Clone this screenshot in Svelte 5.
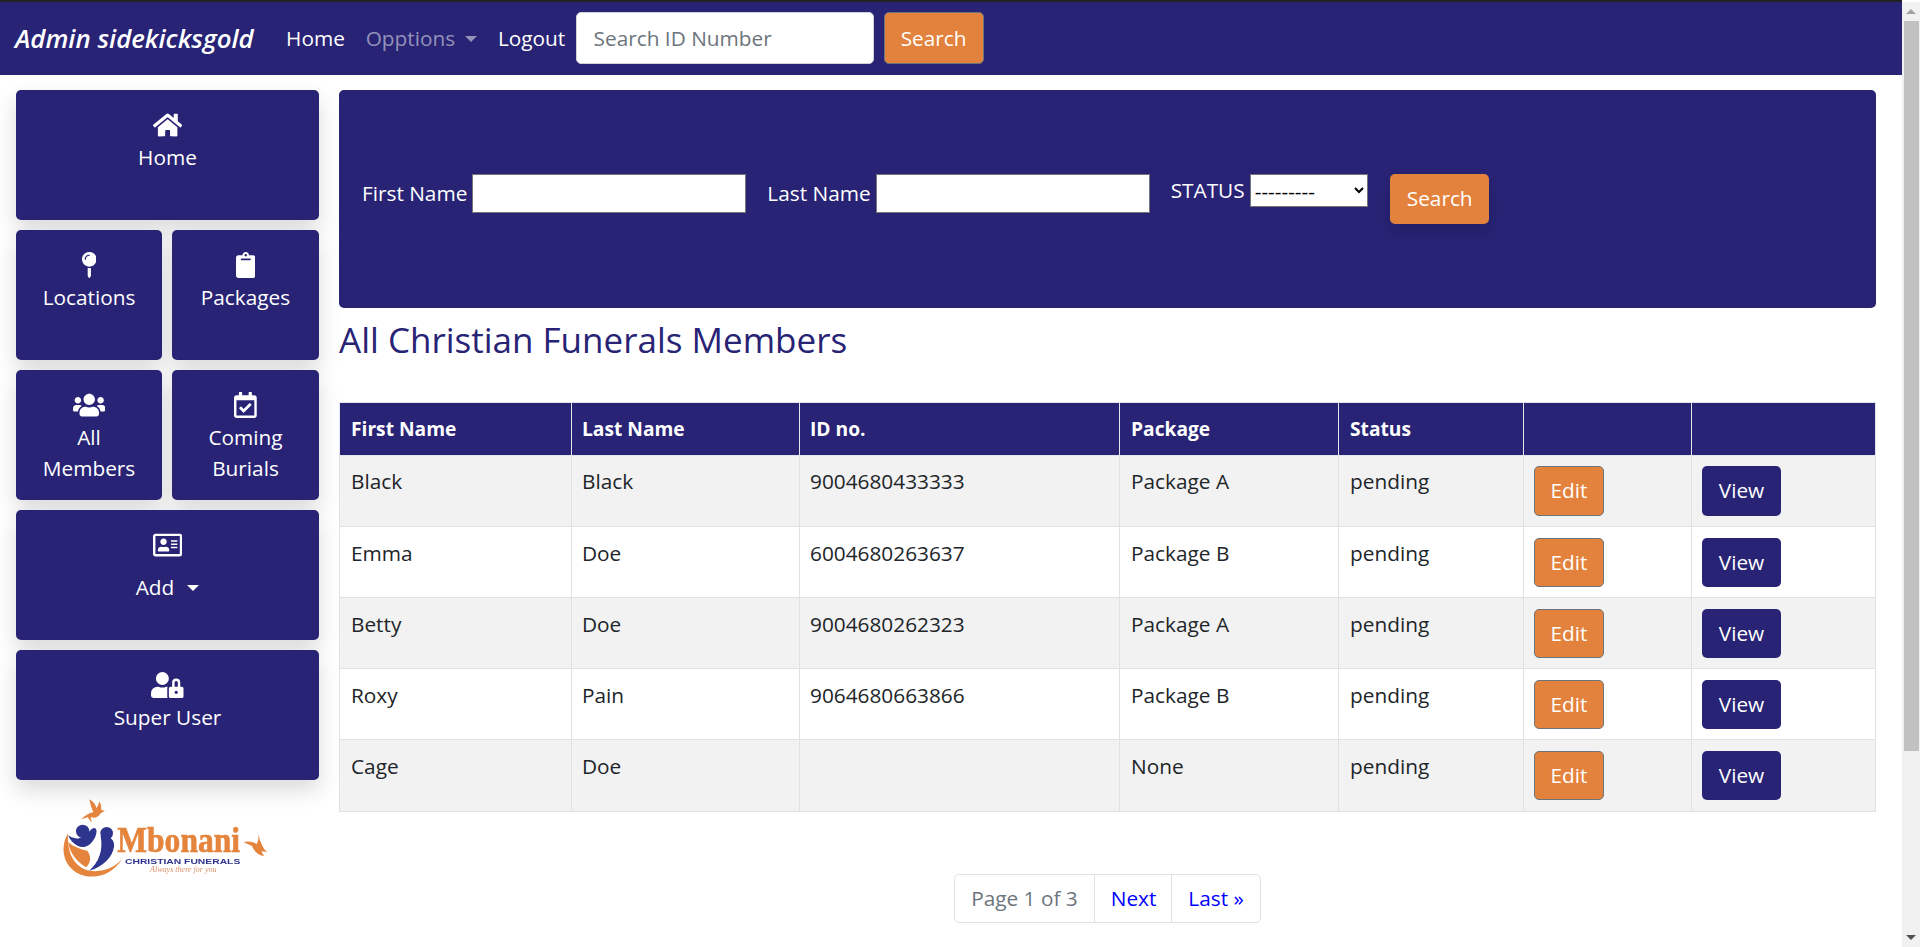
<script>
  const icons = {
    home: { vb: '0 0 576 512', d: 'M280.37 148.26L96 300.11V464a16 16 0 0 0 16 16l112.06-.29a16 16 0 0 0 15.92-16V368a16 16 0 0 1 16-16h64a16 16 0 0 1 16 16v95.64a16 16 0 0 0 16 16.05L464 480a16 16 0 0 0 16-16V300L295.67 148.26a12.19 12.19 0 0 0-15.3 0zM571.6 251.47L488 182.56V44.05a12 12 0 0 0-12-12h-56a12 12 0 0 0-12 12v72.61L318.47 43a48 48 0 0 0-61 0L4.34 251.47a12 12 0 0 0-1.6 16.9l25.5 31A12 12 0 0 0 45.15 301l235.22-193.74a12.19 12.19 0 0 1 15.3 0L530.9 301a12 12 0 0 0 16.9-1.6l25.5-31a12 12 0 0 0-1.7-16.93z' },
    pin: { vb: '0 0 288 512', d: 'M112 316.94v156.69l22.02 33.02c4.75 7.12 15.22 7.12 19.97 0L176 473.63V316.94c-10.39 1.92-21.06 3.06-32 3.06s-21.61-1.14-32-3.06zM144 0C64.47 0 0 64.47 0 144s64.47 144 144 144 144-64.47 144-144S223.53 0 144 0zm0 76c-37.5 0-68 30.5-68 68 0 6.62-5.38 12-12 12s-12-5.38-12-12c0-50.73 41.28-92 92-92 6.62 0 12 5.38 12 12s-5.38 12-12 12z' },
    clip: { vb: '0 0 384 512', d: 'M384 112v352c0 26.51-21.49 48-48 48H48c-26.51 0-48-21.49-48-48V112c0-26.51 21.49-48 48-48h80c0-35.29 28.71-64 64-64s64 28.71 64 64h80c26.51 0 48 21.49 48 48zM192 40c-13.255 0-24 10.745-24 24s10.745 24 24 24 24-10.745 24-24-10.745-24-24-24m96 114v-20a6 6 0 0 0-6-6H102a6 6 0 0 0-6 6v20a6 6 0 0 0 6 6h180a6 6 0 0 0 6-6z' },
    users: { vb: '0 0 640 512', d: 'M96 224c35.3 0 64-28.7 64-64s-28.7-64-64-64-64 28.7-64 64 28.7 64 64 64zm448 0c35.3 0 64-28.7 64-64s-28.7-64-64-64-64 28.7-64 64 28.7 64 64 64zm32 32h-64c-17.6 0-33.5 7.1-45.1 18.6 40.3 22.1 68.9 62 75.1 109.4h66c17.7 0 32-14.3 32-32v-32c0-35.3-28.7-64-64-64zm-256 0c61.9 0 112-50.1 112-112S381.9 32 320 32 208 82.1 208 144s50.1 112 112 112zm76.8 32h-8.3c-20.8 10-43.9 16-68.5 16s-47.6-6-68.5-16h-8.3C179.6 288 128 339.6 128 403.2V432c0 26.5 21.5 48 48 48h288c26.5 0 48-21.5 48-48v-28.8c0-63.6-51.6-115.2-115.2-115.2zm-223.7-13.4C161.5 263.1 145.6 256 128 256H64c-35.3 0-64 28.7-64 64v32c0 17.7 14.3 32 32 32h65.9c6.3-47.4 34.9-87.3 75.2-109.4z' },
    cal: { vb: '0 0 448 512', d: 'M400 64h-48V12c0-6.627-5.373-12-12-12h-40c-6.627 0-12 5.373-12 12v52H160V12c0-6.627-5.373-12-12-12h-40c-6.627 0-12 5.373-12 12v52H48C21.49 64 0 85.49 0 112v352c0 26.51 21.49 48 48 48h352c26.51 0 48-21.49 48-48V112c0-26.51-21.49-48-48-48zm-6 400H54a6 6 0 0 1-6-6V160h352v298a6 6 0 0 1-6 6zm-52.849-200.65L198.842 404.519c-4.705 4.667-12.303 4.637-16.971-.068l-75.091-75.699c-4.667-4.705-4.637-12.303.068-16.971l22.719-22.536c4.705-4.667 12.303-4.637 16.97.069l44.104 44.461 111.072-110.181c4.705-4.667 12.303-4.637 16.971.068l22.536 22.718c4.667 4.706 4.637 12.304-.069 16.971z' },
    card: { vb: '0 0 576 512', d: 'M528 32H48C21.5 32 0 53.5 0 80v352c0 26.5 21.5 48 48 48h480c26.5 0 48-21.5 48-48V80c0-26.5-21.5-48-48-48zm0 400H48V80h480v352zM208 256c35.3 0 64-28.7 64-64s-28.7-64-64-64-64 28.7-64 64 28.7 64 64 64zm-89.6 128h179.2c12.4 0 22.4-8.6 22.4-19.2v-19.2c0-31.8-30.1-57.6-67.2-57.6-10.8 0-18.7 8-44.8 8-26.9 0-33.4-8-44.8-8-37.1 0-67.2 25.8-67.2 57.6v19.2c0 10.6 10 19.2 22.4 19.2zM360 320h112c4.4 0 8-3.6 8-8v-16c0-4.4-3.6-8-8-8H360c-4.4 0-8 3.6-8 8v16c0 4.4 3.6 8 8 8zm0-64h112c4.4 0 8-3.6 8-8v-16c0-4.4-3.6-8-8-8H360c-4.4 0-8 3.6-8 8v16c0 4.4 3.6 8 8 8zm0-64h112c4.4 0 8-3.6 8-8v-16c0-4.4-3.6-8-8-8H360c-4.4 0-8 3.6-8 8v16c0 4.4 3.6 8 8 8z' },
    lock: { vb: '0 0 640 512', d: 'M224 256A128 128 0 1 0 96 128a128 128 0 0 0 128 128zm96 64a63.08 63.08 0 0 1 8.1-30.5c-4.8-.5-9.5-1.5-14.5-1.5h-16.7a174.08 174.08 0 0 1-145.8 0h-16.7A134.43 134.43 0 0 0 0 422.4V464a48 48 0 0 0 48 48h280.9a63.54 63.54 0 0 1-8.9-32zm288-32h-32v-80a80 80 0 0 0-160 0v80h-32a32 32 0 0 0-32 32v160a32 32 0 0 0 32 32h224a32 32 0 0 0 32-32V320a32 32 0 0 0-32-32zM496 432a32 32 0 1 1 32-32 32 32 0 0 1-32 32zm32-144h-64v-80a32 32 0 0 1 64 0z' }
  };

  const tiles = [
    { icon: 'home', label: 'Home', wide: true },
    { icon: 'pin', label: 'Locations' },
    { icon: 'clip', label: 'Packages' },
    { icon: 'users', label: 'All Members' },
    { icon: 'cal', label: 'Coming Burials' },
    { icon: 'card', label: 'Add', wide: true, caret: true },
    { icon: 'lock', label: 'Super User', wide: true }
  ];

  const headers = ['First Name', 'Last Name', 'ID no.', 'Package', 'Status', '', ''];

  const members = [
    ['Black', 'Black', '9004680433333', 'Package A'],
    ['Emma', 'Doe', '6004680263637', 'Package B'],
    ['Betty', 'Doe', '9004680262323', 'Package A'],
    ['Roxy', 'Pain', '9064680663866', 'Package B'],
    ['Cage', 'Doe', '', 'None']
  ];
</script>

<div class="page">
  <nav class="navbar">
    <span class="brand">Admin sidekicksgold</span>
    <a class="nav-link">Home</a>
    <a class="nav-link muted">Opptions<i class="caret"></i></a>
    <a class="nav-link">Logout</a>
    <input class="nav-search" placeholder="Search ID Number" />
    <button class="orange nav-btn">Search</button>
  </nav>

  <div class="content">
    <aside class="sidebar">
      <div class="tiles">
        {#each tiles as t}
          <div class="tile" class:wide={t.wide} class:drop={t.caret}>
            <svg class="icon" viewBox={icons[t.icon].vb} fill="currentColor"><path d={icons[t.icon].d} /></svg>
            <span class="tile-label">{t.label}{#if t.caret}<i class="caret white"></i>{/if}</span>
          </div>
        {/each}
      </div>

      <svg class="logo" viewBox="0 0 750 360">
        <g fill="#e5843c">
          <path d="M148 58 C160 64 166 74 170 84 C174 78 177 70 178 64 C184 74 184 84 184 90 L195 92 L182 100 C174 114 162 116 152 110 L155 128 L143 112 L124 118 C134 106 146 100 160 96 C154 84 150 70 148 58Z" />
          <path d="M652 154 C658 168 656 180 650 192 C640 186 626 182 610 186 L636 198 C642 214 656 226 672 228 L664 214 L682 216 C668 206 666 190 660 182 C658 172 656 164 652 154Z" />
          <path d="M84 160 C60 200 68 254 110 278 C154 302 214 290 246 238 C222 264 186 278 150 272 C108 264 80 226 84 160Z" />
          <path d="M84 186 C90 220 110 244 138 262 C156 244 152 226 142 212 C122 208 100 200 84 186Z" />
          <text class="logo-name" x="232" y="215" textLength="368" lengthAdjust="spacingAndGlyphs">Mbonani</text>
        </g>
        <g fill="#2e358f">
          <circle cx="128" cy="154" r="20" />
          <path d="M84 166 C104 180 126 180 150 152 C164 136 176 146 166 170 C152 200 130 206 114 198 C100 192 90 180 84 166Z" />
          <circle cx="200" cy="160" r="19" />
          <path d="M182 168 C206 164 226 180 222 200 C218 230 190 260 148 272 C176 246 190 214 182 168Z" />
          <text class="logo-sub" x="255" y="251" textLength="346" lengthAdjust="spacingAndGlyphs">CHRISTIAN FUNERALS</text>
        </g>
        <text class="logo-tag" x="330" y="276" textLength="200" lengthAdjust="spacingAndGlyphs">Always there for you</text>
      </svg>
    </aside>

    <main class="main">
      <form class="filter">
        <label class="field">First Name<input type="text" /></label>
        <label class="field">Last Name<input type="text" /></label>
        <label class="field status">STATUS
          <select><option>---------</option></select>
        </label>
        <button type="button" class="orange filter-btn">Search</button>
      </form>

      <h1>All Christian Funerals Members</h1>

      <table>
        <thead>
          <tr>{#each headers as h}<th>{h}</th>{/each}</tr>
        </thead>
        <tbody>
          {#each members as m}
            <tr>
              {#each m as cell}<td>{cell}</td>{/each}
              <td>pending</td>
              <td class="act"><button class="orange edit">Edit</button></td>
              <td class="act"><button class="view">View</button></td>
            </tr>
          {/each}
        </tbody>
      </table>

      <div class="pager-wrap">
        <div class="pager">
          <span class="current">Page 1 of 3</span>
          <a>Next</a>
          <a>Last »</a>
        </div>
      </div>
    </main>
  </div>

  <div class="scrollbar">
    <i class="arrow up"></i>
    <div class="thumb"></div>
    <i class="arrow down"></i>
  </div>
</div>

<style>
  :global(body) {
    margin: 0;
    background: #fff;
    overflow: hidden;
  }

  .page {
    width: 1902px;
    height: 947px;
    font-family: "Open Sans", sans-serif;
    font-size: 20.8px;
    line-height: 31px;
    color: #212529;
    box-sizing: border-box;
  }

  .navbar {
    height: 72px;
    padding-bottom: 1px;
    border-top: 2px solid #222;
    background: #282375;
    color: #fff;
    display: flex;
    align-items: center;
    padding-left: 15px;
  }

  .brand {
    font-size: 25.8px;
    font-weight: 600;
    font-style: italic;
    margin-right: 22px;
    white-space: nowrap;
  }

  .nav-link {
    padding: 0 10.4px;
    color: #fff;
    white-space: nowrap;
  }

  .nav-link.muted {
    color: rgba(255, 255, 255, 0.5);
  }

  .caret {
    display: inline-block;
    margin-left: 10px;
    vertical-align: 4px;
    border-top: 6px solid rgba(255, 255, 255, 0.5);
    border-left: 6px solid transparent;
    border-right: 6px solid transparent;
  }

  .caret.white {
    border-top-color: #fff;
    margin-left: 13px;
  }

  .nav-search {
    width: 298px;
    height: 52px;
    box-sizing: border-box;
    border: 1px solid #ced4da;
    border-radius: 5px;
    padding: 0 17px;
    font: inherit;
    margin-right: 10px;
    color: #495057;
  }

  .nav-search::placeholder {
    color: #6c757d;
    opacity: 1;
  }

  button {
    font: inherit;
    color: #fff;
    cursor: pointer;
  }

  .orange {
    background: #e3823d;
  }

  .nav-btn {
    width: 100px;
    height: 52px;
    border: 1px solid #6c757d;
    border-radius: 5px;
    padding: 0;
  }

  .content {
    display: flex;
    align-items: flex-start;
    padding: 15px 26px 0 16px;
    gap: 20px;
  }

  .sidebar {
    width: 303px;
    flex: none;
  }

  .tiles {
    display: grid;
    grid-template-columns: 146px 147px;
    grid-auto-rows: 130px;
    gap: 10px;
  }

  .tile {
    background: #282375;
    color: #fff;
    border-radius: 5px;
    box-shadow: 0 10px 22px rgba(0, 0, 0, 0.15);
    display: flex;
    flex-direction: column;
    align-items: center;
    padding: 21.5px 10px 0;
    text-align: center;
    box-sizing: border-box;
  }

  .tile.wide {
    grid-column: 1 / -1;
  }

  .icon {
    height: 26px;
    flex: none;
    display: block;
  }

  .tile-label {
    margin-top: 4.5px;
    padding: 0 8px;
  }

  .tile.drop .tile-label {
    margin-top: 14.5px;
  }

  .logo {
    display: block;
    width: 250px;
    height: 120px;
    margin-left: 24px;
    filter: blur(0.3px);
  }

  .logo-name {
    font-family: "Liberation Serif", serif;
    font-weight: 700;
    font-size: 110px;
    stroke: #e5843c;
    stroke-width: 2;
  }

  .logo-sub {
    font-family: "Liberation Sans", sans-serif;
    font-weight: 700;
    font-size: 22px;
  }

  .logo-tag {
    fill: #d8946a;
    font-family: "Liberation Serif", serif;
    font-style: italic;
    font-size: 22px;
  }

  .main {
    width: 1537px;
    flex: none;
  }

  .filter {
    height: 218px;
    box-sizing: border-box;
    background: #282375;
    color: #fff;
    border-radius: 5px;
    padding: 84px 0 0 23px;
    display: flex;
    align-items: flex-start;
  }

  .field {
    display: flex;
    align-items: center;
    gap: 5px;
    margin-right: 21px;
    height: 39px;
  }

  .field input {
    width: 274px;
    height: 39px;
    box-sizing: border-box;
    border: 1px solid #767676;
    background: #fff;
    font: inherit;
    padding: 0 2px;
  }

  .field.status {
    height: 33px;
    gap: 5px;
    margin-right: 22.5px;
  }

  .field select {
    width: 118px;
    height: 33px;
    box-sizing: border-box;
    font: inherit;
    border: 1px solid #767676;
    border-radius: 0;
    background: #fff;
    color: #000;
  }

  .filter-btn {
    width: 99px;
    height: 50px;
    border: none;
    border-radius: 5px;
    padding: 0 0 2px;
    box-shadow: 0 8px 16px rgba(0, 0, 0, 0.15);
  }

  h1 {
    margin: 0;
    padding-top: 11px;
    height: 83px;
    box-sizing: content-box;
    color: #282375;
    font-size: 35px;
    line-height: 42px;
    font-weight: 400;
  }

  table {
    width: 1537px;
    table-layout: fixed;
    border-collapse: collapse;
  }

  th {
    background: #282375;
    color: #fff;
    font-size: 19.2px;
    font-weight: 700;
    text-align: left;
    height: 53px;
    padding: 0 10px 2px;
    box-sizing: border-box;
    border: 1px solid #e4e6ee;
  }

  th:nth-child(1) { width: 232px; }
  th:nth-child(2) { width: 228px; }
  th:nth-child(3) { width: 320px; }
  th:nth-child(4) { width: 219px; }
  th:nth-child(5) { width: 185px; }
  th:nth-child(6) { width: 168px; }

  td {
    height: 71px;
    padding: 11px 10px 10px;
    box-sizing: border-box;
    vertical-align: top;
    border: 1px solid #dee2e6;
  }

  th:nth-child(1),
  td:nth-child(1),
  th:nth-child(4),
  td:nth-child(4),
  th:nth-child(5),
  td:nth-child(5) {
    padding-left: 11px;
  }

  tbody tr:first-child td {
    padding-top: 10px;
  }

  tbody tr:last-child td {
    height: 72px;
  }

  tbody tr:nth-child(odd) td {
    background: #f2f2f2;
  }

  td.act {
    padding-bottom: 0;
  }

  .edit,
  .view {
    display: block;
    height: 49px;
    padding: 0;
    border-radius: 5px;
  }

  tbody tr:first-child .edit,
  tbody tr:first-child .view {
    height: 50px;
    padding-bottom: 2px;
  }

  .edit {
    width: 70px;
    border: 1px solid #6c757d;
  }

  .view {
    width: 79px;
    border: none;
    background: #282375;
  }

  .pager-wrap {
    display: flex;
    justify-content: center;
    margin-top: 62px;
  }

  .pager {
    display: flex;
    height: 49px;
    box-sizing: border-box;
    border: 1px solid #dee2e6;
    border-radius: 5px;
    line-height: 47px;
    background: #fff;
  }

  .pager > * {
    padding: 0 16px;
  }

  .pager .current {
    color: #6c757d;
  }

  .pager a {
    color: #0000ff;
    border-left: 1px solid #dee2e6;
  }

  .pager a:nth-of-type(1) {
    padding-right: 15px;
  }

  .scrollbar {
    position: fixed;
    top: 2px;
    right: 0;
    bottom: 0;
    width: 18px;
    background: #f1f1f1;
  }

  .thumb {
    position: absolute;
    top: 19px;
    left: 2px;
    width: 15px;
    height: 730px;
    background: #c1c1c1;
  }

  .arrow {
    position: absolute;
    left: 4px;
    border-left: 5px solid transparent;
    border-right: 5px solid transparent;
  }

  .arrow.up {
    top: 7px;
    border-bottom: 5px solid #a3a3a3;
  }

  .arrow.down {
    bottom: 7px;
    border-top: 5px solid #505050;
  }
</style>
